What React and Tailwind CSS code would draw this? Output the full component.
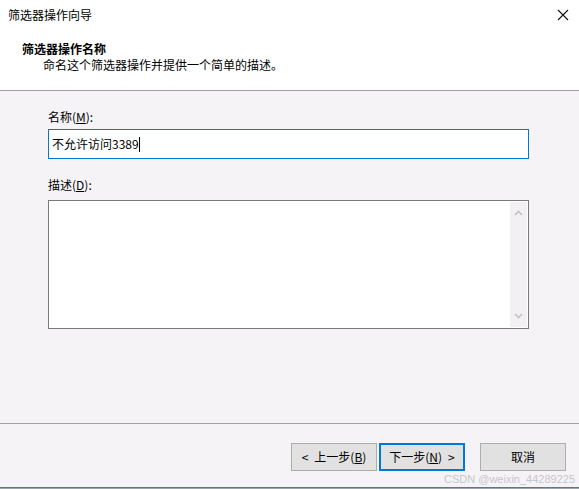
import React from 'react';

const font = { fontFamily: '"Microsoft YaHei UI", "Noto Sans CJK SC", "Liberation Sans", sans-serif' };

function Chevron({ up }) {
  return (
    <svg width="9" height="6" viewBox="0 0 9 6" className="block">
      <path
        d={up ? 'M1 5 L4.5 1.5 L8 5' : 'M1 1 L4.5 4.5 L8 1'}
        fill="none"
        stroke="#c2c2c2"
        strokeWidth="1.6"
      />
    </svg>
  );
}

function Btn({ children, primary }) {
  return (
    <button
      className={
        'h-[28px] w-[86px] flex items-center justify-center bg-[#e1e1e1] text-[12px] text-black ' +
        (primary ? 'border-2 border-[#0078d7]' : 'border border-[#adadad]')
      }
    >
      {children}
    </button>
  );
}

export default function App() {
  return (
    <div className="relative w-[579px] h-[489px] flex flex-col bg-[#f6f3f6] overflow-hidden" style={font}>
      {/* header */}
      <div className="h-[91px] bg-white border-b border-[#a0a0a0] flex flex-col">
        <div className="h-[30px] flex items-center justify-between pl-[8px] pr-[10px]">
          <span className="text-[12px] leading-[16px] text-black">筛选器操作向导</span>
          <svg width="12" height="12" viewBox="0 0 12 12">
            <path d="M1 1 L11 11 M11 1 L1 11" stroke="#111" strokeWidth="1.1" />
          </svg>
        </div>
        <div className="pt-[11px] pl-[22px] text-[12px] leading-[16px] font-bold text-black">筛选器操作名称</div>
        <div className="pl-[43px] text-[12px] leading-[16px] text-black">命名这个筛选器操作并提供一个简单的描述。</div>
      </div>

      {/* body */}
      <div className="flex-1 flex flex-col pl-[48px] pr-[50px] pt-[18px]">
        <div className="text-[12px] leading-[16px] text-black">
          名称(<span className="underline">M</span>):
        </div>
        <div className="mt-[4px] h-[30px] bg-white border border-[#0078d7] flex items-center pl-[3px]">
          <span className="text-[12px] leading-[16px] text-black">不允许访问3389</span>
          <span className="w-[1px] h-[15px] bg-black" />
        </div>
        <div className="mt-[18px] text-[12px] leading-[16px] text-black">
          描述(<span className="underline">D</span>):
        </div>
        <div className="mt-[7px] h-[129px] bg-white border border-[#7a7a7a] flex justify-end p-[1px]">
          <div className="w-[17px] bg-[#f3f0f3] flex flex-col items-center justify-between py-[8px]">
            <Chevron up />
            <Chevron />
          </div>
        </div>
      </div>

      {/* footer */}
      <div className="h-[64px] border-t border-[#a0a0a0] flex justify-end items-start pt-[19px] pr-[13px]">
        <div className="flex gap-[2px]">
          <Btn>
            <span className="mr-[6px]">&lt;</span>上一步(<span className="underline">B</span>)
          </Btn>
          <Btn primary>
            下一步(<span className="underline">N</span>)<span className="ml-[6px]">&gt;</span>
          </Btn>
        </div>
        <div className="ml-[15px]">
          <Btn>取消</Btn>
        </div>
      </div>

      {/* taskbar edge */}
      <div className="h-[2px] bg-[#3b7cc8] border-b border-[#9aa4ae]" />

      {/* watermark */}
      <div
        className="absolute left-[444px] top-[471px] text-[11px] leading-[16px] text-[#c6c6c6] whitespace-nowrap"
        style={{ fontFamily: '"Liberation Sans", Arial, sans-serif' }}
      >
        CSDN @weixin_44289225
      </div>
    </div>
  );
}
